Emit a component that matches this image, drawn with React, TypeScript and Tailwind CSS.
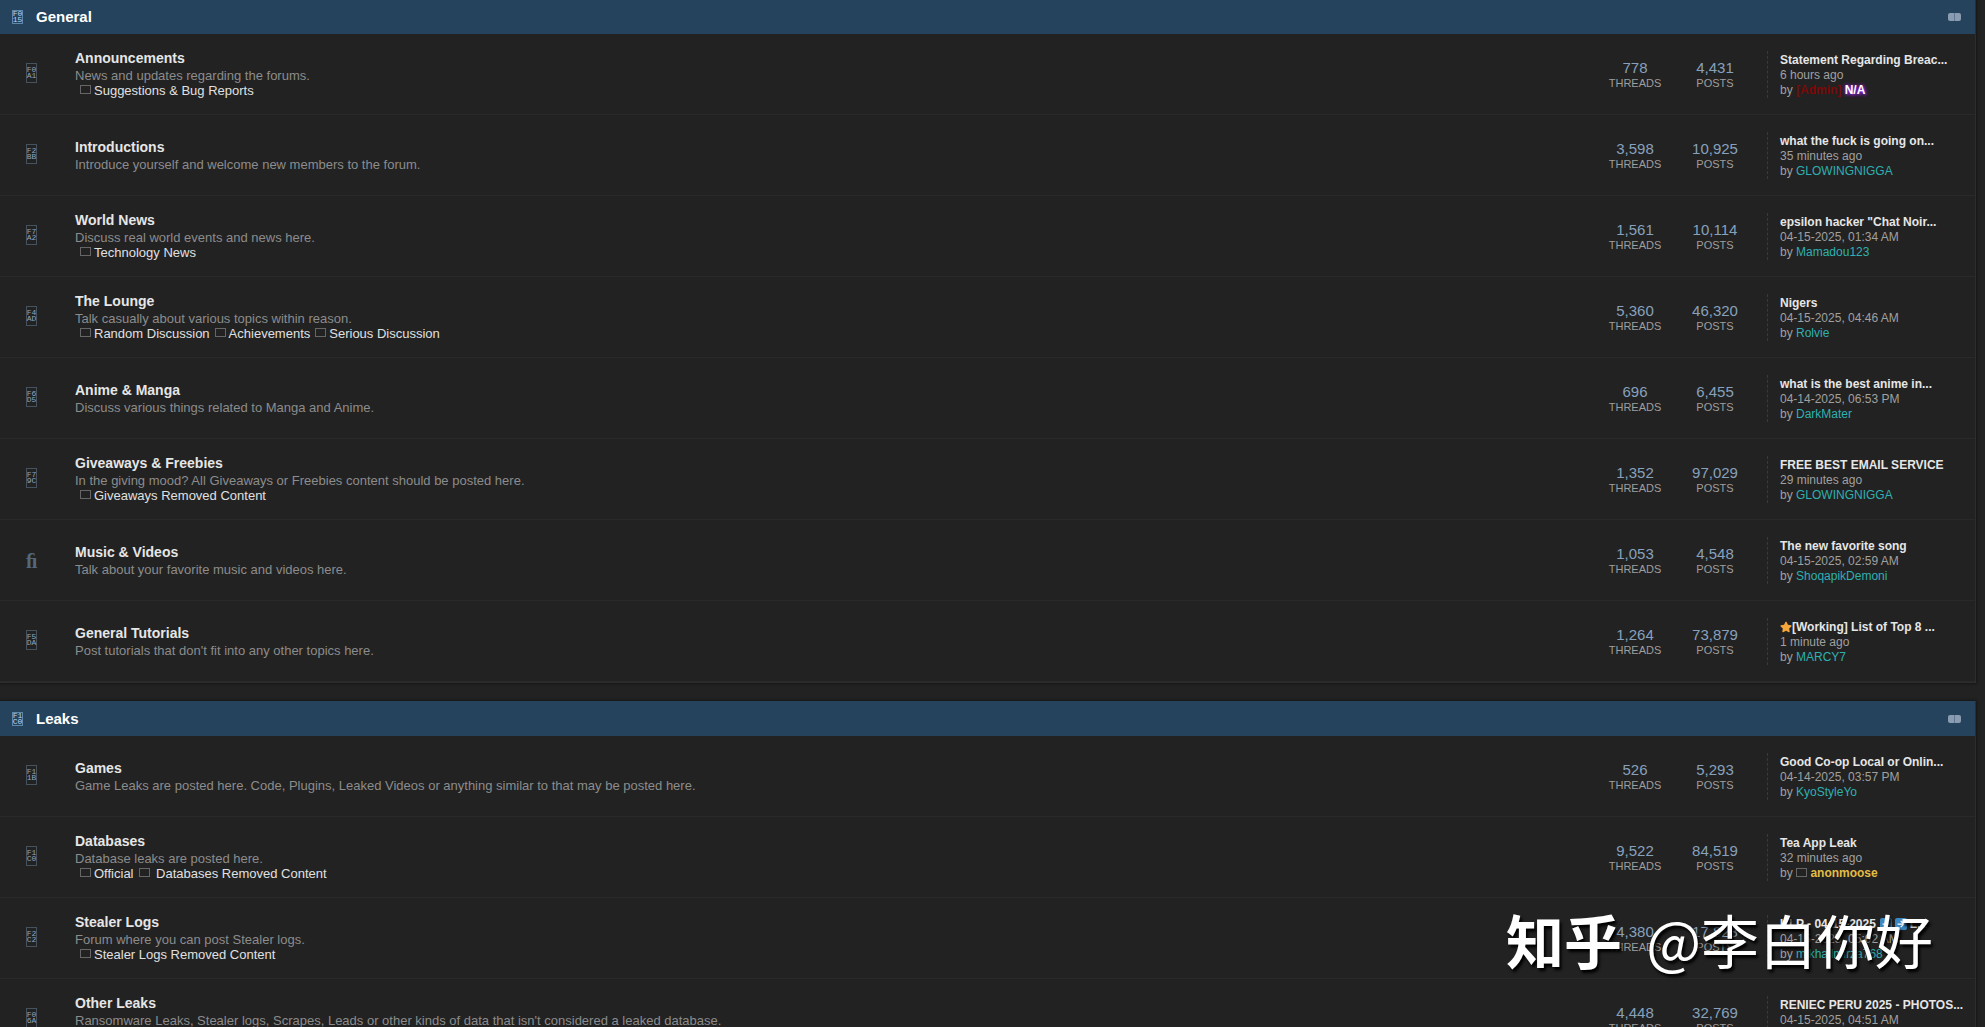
import { FaArrowRight, FaStar } from "react-icons/fa";
import clsx from "clsx";

type TForum = {
  code: string;
  name: string;
  desc: string;
  subs?: string[];
  threads: string;
  posts: string;
  last: string;
  time: string;
  user: string;
  kind?: "admin" | "gold" | "star" | "tags";
};

type TCategory = { code: string; name: string; forums: TForum[] };

const categories: TCategory[] = [
  {
    code: "F015",
    name: "General",
    forums: [
      {
        code: "F0A1",
        name: "Announcements",
        desc: "News and updates regarding the forums.",
        subs: ["Suggestions & Bug Reports"],
        threads: "778",
        posts: "4,431",
        last: "Statement Regarding Breac...",
        time: "6 hours ago",
        user: "N/A",
        kind: "admin",
      },
      {
        code: "F2BB",
        name: "Introductions",
        desc: "Introduce yourself and welcome new members to the forum.",
        threads: "3,598",
        posts: "10,925",
        last: "what the fuck is going on...",
        time: "35 minutes ago",
        user: "GLOWINGNIGGA",
      },
      {
        code: "F7A2",
        name: "World News",
        desc: "Discuss real world events and news here.",
        subs: ["Technology News"],
        threads: "1,561",
        posts: "10,114",
        last: 'epsilon hacker "Chat Noir...',
        time: "04-15-2025, 01:34 AM",
        user: "Mamadou123",
      },
      {
        code: "F4AD",
        name: "The Lounge",
        desc: "Talk casually about various topics within reason.",
        subs: ["Random Discussion", "Achievements", "Serious Discussion"],
        threads: "5,360",
        posts: "46,320",
        last: "Nigers",
        time: "04-15-2025, 04:46 AM",
        user: "Rolvie",
      },
      {
        code: "F6D5",
        name: "Anime & Manga",
        desc: "Discuss various things related to Manga and Anime.",
        threads: "696",
        posts: "6,455",
        last: "what is the best anime in...",
        time: "04-14-2025, 06:53 PM",
        user: "DarkMater",
      },
      {
        code: "F79C",
        name: "Giveaways & Freebies",
        desc: "In the giving mood? All Giveaways or Freebies content should be posted here.",
        subs: ["Giveaways Removed Content"],
        threads: "1,352",
        posts: "97,029",
        last: "FREE BEST EMAIL SERVICE",
        time: "29 minutes ago",
        user: "GLOWINGNIGGA",
      },
      {
        code: "fi",
        name: "Music & Videos",
        desc: "Talk about your favorite music and videos here.",
        threads: "1,053",
        posts: "4,548",
        last: "The new favorite song",
        time: "04-15-2025, 02:59 AM",
        user: "ShoqapikDemoni",
      },
      {
        code: "F5DA",
        name: "General Tutorials",
        desc: "Post tutorials that don't fit into any other topics here.",
        threads: "1,264",
        posts: "73,879",
        last: "[Working] List of Top 8 ...",
        time: "1 minute ago",
        user: "MARCY7",
        kind: "star",
      },
    ],
  },
  {
    code: "F1C0",
    name: "Leaks",
    forums: [
      {
        code: "F11B",
        name: "Games",
        desc: "Game Leaks are posted here. Code, Plugins, Leaked Videos or anything similar to that may be posted here.",
        threads: "526",
        posts: "5,293",
        last: "Good Co-op Local or Onlin...",
        time: "04-14-2025, 03:57 PM",
        user: "KyoStyleYo",
      },
      {
        code: "F1C0",
        name: "Databases",
        desc: "Database leaks are posted here.",
        subs: ["Official", "\u00a0Databases Removed Content"],
        threads: "9,522",
        posts: "84,519",
        last: "Tea App Leak",
        time: "32 minutes ago",
        user: "anonmoose",
        kind: "gold",
      },
      {
        code: "F2C2",
        name: "Stealer Logs",
        desc: "Forum where you can post Stealer logs.",
        subs: ["Stealer Logs Removed Content"],
        threads: "4,380",
        posts: "17,823",
        last: "ULP - 04-15-2025",
        time: "04-15-2025, 05:02 AM",
        user: "mikhailmirza768",
        kind: "tags",
      },
      {
        code: "F06A",
        name: "Other Leaks",
        desc: "Ransomware Leaks, Stealer logs, Scrapes, Leads or other kinds of data that isn't considered a leaked database.",
        subs: ["Other Leaks Removed Content"],
        threads: "4,448",
        posts: "32,769",
        last: "RENIEC PERU 2025 - PHOTOS...",
        time: "04-15-2025, 04:51 AM",
        user: "Panda",
      },
    ],
  },
];

const CodeBox = ({ code, header }: { code: string; header?: boolean }) => {
  if (code === "fi") {
    return (
      <span className="pt-1 font-['Liberation_Serif'] text-xl font-bold leading-5 text-[#53687c]">
        ﬁ
      </span>
    );
  }
  return (
    <span
      className={clsx(
        "flex w-[11px] shrink-0 flex-col items-center justify-center border font-['Liberation_Mono'] text-[8px] leading-[6px]",
        header
          ? "h-[14px] border-[#5f86ab] text-[#b4d8f5]"
          : "h-5 border-[#46525e] text-[#8fa6bb]"
      )}
    >
      <span>{code.slice(0, 2)}</span>
      <span>{code.slice(2)}</span>
    </span>
  );
};

const EmptyBox = () => (
  <span className="inline-block h-[9px] w-[11px] border border-[#666666]" />
);

const Tag = () => (
  <span className="flex h-3 w-3 shrink-0 items-center justify-center rounded-xs bg-[#3b88c3]">
    <FaArrowRight className="size-2 text-white" />
  </span>
);

const Stat = ({ value, label }: { value: string; label: string }) => (
  <div className="w-20 shrink-0 pt-0.5 text-center">
    <div className="text-[15px] leading-4 text-[#87a1bd]">{value}</div>
    <div className="text-[11px] leading-[15px] text-[#9e9e9e]">{label}</div>
  </div>
);

const LastPost = ({ forum }: { forum: TForum }) => (
  <div className="ml-3 w-[208px] shrink-0 whitespace-nowrap border-l border-dashed border-[#3a3a3a] pt-0.5 pl-3 text-xs leading-[15px] text-[#a0a0a0]">
    <a href="#" className="flex items-center font-bold text-[#e6e6e6]">
      {forum.kind === "star" && <FaStar className="size-3 text-[#f5a73b]" />}
      <span>{forum.last}</span>
      {forum.kind === "tags" && (
        <span className="ml-1 flex items-center gap-[3px]">
          <Tag />
          <Tag />
          <span>L...</span>
        </span>
      )}
    </a>
    <div>{forum.time}</div>
    <div>
      by{" "}
      {forum.kind === "gold" && (
        <>
          <EmptyBox />{" "}
        </>
      )}
      <a
        href="#"
        className={clsx(
          forum.kind === "gold" && "font-bold text-[#e2bd45]",
          forum.kind === "admin" && "font-bold text-white",
          forum.kind !== "gold" && forum.kind !== "admin" && "text-[#2fb0b0]"
        )}
      >
        {forum.kind === "admin" && (
          <span className="text-[#7d0808]">[Admin] </span>
        )}
        <span
          className={clsx(
            forum.kind === "admin" &&
              "[text-shadow:1px_1px_3px_#a020f0,0_0_4px_#a020f0]"
          )}
        >
          {forum.user}
        </span>
      </a>
    </div>
  </div>
);

const ForumRow = ({ forum }: { forum: TForum }) => (
  <div className="flex h-[81px] items-center border-b border-[#292929]">
    <div className="flex w-[75px] shrink-0 pb-0.5 pl-[26px]">
      <CodeBox code={forum.code} />
    </div>
    <div className="min-w-0 flex-1 pb-px text-[13px] leading-[15px]">
      <h3 className="mb-px text-sm font-bold leading-[18px]">
        <a href="#" className="text-[#e6e6e6]">
          {forum.name}
        </a>
      </h3>
      <p className="text-[#8c8c8c]">{forum.desc}</p>
      {forum.subs && (
        <div className="flex gap-[5px] pl-[5px]">
          {forum.subs.map((sub) => (
            <a
              key={sub}
              href="#"
              className="flex items-start gap-[3px] text-[#e0e0e0]"
            >
              <span className="flex pt-0.5">
                <EmptyBox />
              </span>
              {sub}
            </a>
          ))}
        </div>
      )}
    </div>
    <Stat value={forum.threads} label="THREADS" />
    <Stat value={forum.posts} label="POSTS" />
    <LastPost forum={forum} />
  </div>
);

const Category = ({ category }: { category: TCategory }) => (
  <section className="border-r border-b border-[#2d2d2d] shadow-[0_0_3px_#0c0c0c]">
    <header className="flex h-[35px] items-center bg-[#26435e] pl-3 pr-3.5">
      <CodeBox code={category.code} header />
      <h2 className="ml-[13px] pt-px text-[15px] font-bold text-white">
        {category.name}
      </h2>
      <button
        type="button"
        aria-label="Collapse"
        className="ml-auto flex h-2 w-[13px] overflow-hidden rounded-xs bg-[#8a9db0]"
      >
        <span className="h-2 w-[7px] border-r border-[#5f7790]" />
      </button>
    </header>
    {category.forums.map((forum) => (
      <ForumRow key={forum.name} forum={forum} />
    ))}
  </section>
);

const App = () => {
  return (
    <div className="relative h-screen overflow-hidden bg-[#222222] font-['Liberation_Sans',sans-serif]">
      <main className="-mt-px mr-[9px] flex flex-col gap-[18px]">
        {categories.map((category) => (
          <Category key={category.name} category={category} />
        ))}
      </main>
      <div className="pointer-events-none absolute right-[52px] bottom-[46px] flex items-center gap-6 whitespace-nowrap font-['Noto_Sans_CJK_SC',sans-serif] text-[58px] leading-[84px] text-white [text-shadow:2px_3px_3px_#000000]">
        <span className="font-bold">知乎</span>
        <span>@李白你好</span>
      </div>
    </div>
  );
};

export default App;
